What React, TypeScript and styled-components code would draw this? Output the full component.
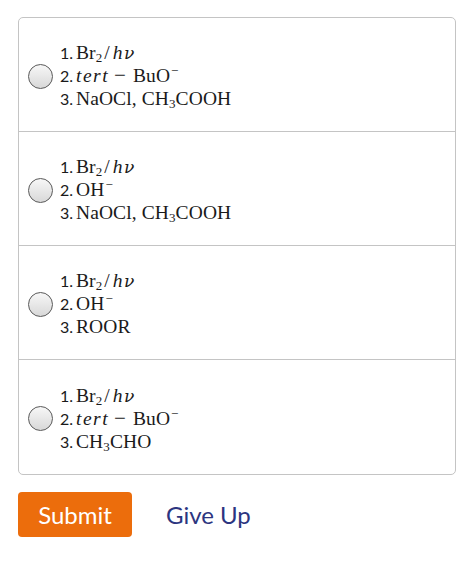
import React, { useState } from 'react';
import styled, { createGlobalStyle } from 'styled-components';

const GlobalStyle = createGlobalStyle`
  html, body {
    margin: 0;
    padding: 0;
    background: #ffffff;
  }
`;

const Page = styled.div`
  padding: 17px 18px 0 18px;
  font-family: 'Lato', 'Open Sans', sans-serif;
`;

const ChoiceList = styled.div`
  width: 438px;
  border: 1.5px solid #c4c4c4;
  border-radius: 5px;
  box-sizing: border-box;
  display: flex;
  flex-direction: column;
`;

const Choice = styled.label<{ $last?: boolean }>`
  display: flex;
  align-items: center;
  gap: 7px;
  height: 114px;
  box-sizing: border-box;
  padding: 2px 0 0 9px;
  border-bottom: ${(p) => (p.$last ? 'none' : '1.5px solid #c4c4c4')};
  cursor: pointer;
`;

const Radio = styled.span<{ $on: boolean }>`
  width: 23px;
  height: 23px;
  flex: none;
  margin-top: 1px;
  border-radius: 50%;
  border: 1.5px solid #5a5a5a;
  background: ${(p) =>
    p.$on
      ? 'radial-gradient(circle, #333 0 5px, #f4f4f4 6px)'
      : 'linear-gradient(#f7f7f7, #d8d8d8)'};
`;

const Steps = styled.div`
  display: flex;
  flex-direction: column;
`;

const Step = styled.div`
  display: flex;
  align-items: baseline;
  height: 23px;
  line-height: 23px;
  color: #1a1a1a;
`;

const Num = styled.span`
  font-family: 'Lato', sans-serif;
  font-size: 16px;
  width: 16px;
`;

const Math = styled.span`
  font-family: 'Liberation Serif', serif;
  font-size: 19.5px;
  white-space: nowrap;
`;

const Roman = styled.span`
  font-family: 'Liberation Serif', serif;
  font-size: 19.5px;
  letter-spacing: 0.1px;
`;

const It = styled.i`
  font-family: 'Liberation Serif', serif;
  font-size: 19.5px;
  letter-spacing: 1.5px;
`;

const Nu = styled.i`
  font-family: 'DejaVu Serif', serif;
  font-size: 17px;
`;

const Slash = styled.span`
  padding: 0 3px 0 2px;
`;

const Sub = styled.sub`
  font-size: 13px;
  vertical-align: -3px;
  line-height: 0;
`;

const Sup = styled.sup`
  font-size: 13px;
  vertical-align: 7px;
  line-height: 0;
  padding-left: 1px;
`;

const Op = styled.span`
  font-family: 'Liberation Serif', serif;
  font-size: 21px;
  padding: 0 7px 0 5px;
`;

const Actions = styled.div`
  display: flex;
  align-items: center;
  gap: 34px;
  margin-top: 17px;
`;

const SubmitButton = styled.button`
  width: 114px;
  height: 45px;
  border: none;
  border-radius: 4px;
  background: #ec6d0c;
  color: #fff;
  font-family: 'Lato', sans-serif;
  font-size: 24px;
  padding: 0;
  cursor: pointer;
`;

const GiveUp = styled.button`
  border: none;
  background: none;
  padding: 0;
  color: #2c3580;
  font-family: 'Lato', sans-serif;
  font-size: 24px;
  cursor: pointer;
`;

const Bromination = () => (
  <Roman>
    Br<Sub>2</Sub>
    <Slash>/</Slash>
    <It>h</It>
    <Nu>ν</Nu>
  </Roman>
);

const TertButoxide = () => (
  <>
    <It>tert</It>
    <Op>−</Op>
    <Roman>
      BuO<Sup>−</Sup>
    </Roman>
  </>
);

const Hydroxide = () => (
  <Roman>
    OH<Sup>−</Sup>
  </Roman>
);

const Haloform = () => (
  <Roman>
    NaOCl, CH<Sub>3</Sub>COOH
  </Roman>
);

const choices: React.ReactNode[][] = [
  [<Bromination />, <TertButoxide />, <Haloform />],
  [<Bromination />, <Hydroxide />, <Haloform />],
  [<Bromination />, <Hydroxide />, <Roman>ROOR</Roman>],
  [
    <Bromination />,
    <TertButoxide />,
    <Roman>
      CH<Sub>3</Sub>CHO
    </Roman>,
  ],
];

const App: React.FC = () => {
  const [selected, setSelected] = useState<number | null>(null);

  return (
    <Page>
      <GlobalStyle />
      <ChoiceList>
        {choices.map((steps, i) => (
          <Choice key={i} $last={i === choices.length - 1} onClick={() => setSelected(i)}>
            <Radio $on={selected === i} />
            <Steps>
              {steps.map((s, j) => (
                <Step key={j}>
                  <Num>{j + 1}.</Num>
                  <Math>{s}</Math>
                </Step>
              ))}
            </Steps>
          </Choice>
        ))}
      </ChoiceList>
      <Actions>
        <SubmitButton>Submit</SubmitButton>
        <GiveUp>Give Up</GiveUp>
      </Actions>
    </Page>
  );
};

export default App;
